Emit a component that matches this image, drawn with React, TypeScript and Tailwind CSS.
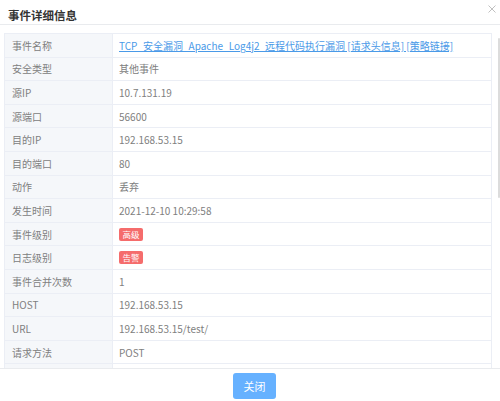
import React from 'react';

type Row = { label: string; value: React.ReactNode };

const Tag = ({ text }: { text: string }) => (
    <span className="inline-flex h-[13px] w-[24px] items-center justify-center rounded-[2px] bg-[#f56c6c] text-[8.5px] leading-none text-white">
        {text}
    </span>
);

const rows: Row[] = [
    {
        label: '事件名称',
        value: (
            <span className="text-[#4a9ae8] underline underline-offset-[1px]">
                TCP_安全漏洞_Apache_Log4j2_远程代码执行漏洞 [请求头信息] [策略链接]
            </span>
        ),
    },
    { label: '安全类型', value: '其他事件' },
    { label: '源IP', value: '10.7.131.19' },
    { label: '源端口', value: '56600' },
    { label: '目的IP', value: '192.168.53.15' },
    { label: '目的端口', value: '80' },
    { label: '动作', value: '丢弃' },
    { label: '发生时间', value: '2021-12-10 10:29:58' },
    { label: '事件级别', value: <Tag text="高级" /> },
    { label: '日志级别', value: <Tag text="告警" /> },
    { label: '事件合并次数', value: '1' },
    { label: 'HOST', value: '192.168.53.15' },
    { label: 'URL', value: '192.168.53.15/test/' },
    { label: '请求方法', value: 'POST' },
    // next row is cut off by the scroll area
    { label: '', value: '' },
];

export default function App() {
    return (
        <div
            className="h-[401px] w-[500px] overflow-hidden bg-white"
            style={{ fontFamily: '"Noto Sans CJK SC", "Noto Sans", sans-serif' }}
        >
            {/* Header */}
            <div className="relative h-[25px] border-b border-[#e9ebee] pl-2 pt-[1px]">
                <span className="text-[11.5px] font-semibold leading-[16px] text-[#333]">事件详细信息</span>
                <svg className="absolute right-[4px] top-[5px]" width="8" height="8" viewBox="0 0 8 8">
                    <path d="M0.5 0.5 L7.5 7.5 M7.5 0.5 L0.5 7.5" stroke="#c0c0c0" strokeWidth="1" />
                </svg>
            </div>

            {/* Body */}
            <div className="relative h-[344px] overflow-hidden border-b border-[#e9ebee] pl-1 pt-2">
                <div className="w-[488px] border-t border-l border-r border-[#ebeef5]">
                    {rows.map((r, i) => (
                        <div key={i} className="flex h-[23.6px] border-b border-[#ebeef5] text-[10px]">
                            <div className="flex w-[108px] shrink-0 items-center border-r border-[#ebeef5] bg-[#f5f7fa] pl-[7px] text-[#808080]">
                                {r.label}
                            </div>
                            <div className="flex flex-1 items-center pl-[6px] text-[#808080]">{r.value}</div>
                        </div>
                    ))}
                </div>
                <div className="absolute right-0 top-[13px] h-[160px] w-[2px] rounded-full bg-[#dcdcdc]" />
            </div>

            {/* Footer */}
            <div className="flex justify-center pl-[9px] pt-[4px]">
                <button className="h-[26px] w-[43px] rounded-[3px] bg-[#66b1ff] text-[11px] text-white">关闭</button>
            </div>
        </div>
    );
}
